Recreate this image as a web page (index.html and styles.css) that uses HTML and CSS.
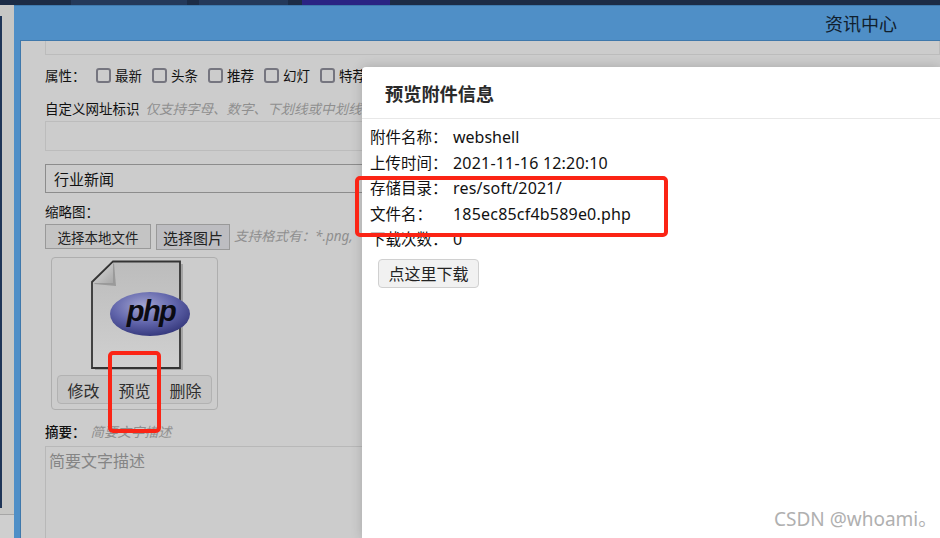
FILE: index.html
```html
<!DOCTYPE html>
<html lang="zh-CN">
<head>
<meta charset="utf-8">
<title>预览附件信息</title>
<link rel="stylesheet" href="styles.css">
</head>
<body>
<div class="page">
  <div class="tabs">
    <span class="tab tab-a"></span>
    <span class="tab tab-b"></span>
    <span class="tab tab-c"></span>
  </div>
  <div class="desk">
    <aside class="side">
      <div class="side-top"><span class="side-stripe"></span></div>
      <div class="side-bottom"></div>
    </aside>
    <main class="window">
      <header class="win-head">资讯中心</header>
      <div class="win-body">
        <div class="cut-input"></div>
        <div class="attrs">
          <span class="attr-label">属性：</span>
          <label class="check"><input type="checkbox">最新</label>
          <label class="check"><input type="checkbox">头条</label>
          <label class="check"><input type="checkbox">推荐</label>
          <label class="check"><input type="checkbox">幻灯</label>
          <label class="check"><input type="checkbox">特荐</label>
        </div>
        <div class="url-label">自定义网址标识<em class="hint hint-url">仅支持字母、数字、下划线或中划线组成</em></div>
        <div class="text-box"></div>
        <div class="select-box">行业新闻</div>
        <div class="thumb-label">缩略图：</div>
        <div class="thumb-actions">
          <button class="btn-local" type="button">选择本地文件</button>
          <button class="btn-image" type="button">选择图片</button>
          <em class="hint hint-format">支持格式有：*.png,</em>
        </div>
        <div class="thumb-card">
          <svg class="php-file" viewBox="0 0 104 110" aria-hidden="true">
            <defs>
              <linearGradient id="sheet" x1="0" y1="0" x2="0" y2="1">
                <stop offset="0" stop-color="#bcbcbc"/>
                <stop offset="1" stop-color="#d0d0d0"/>
              </linearGradient>
              <linearGradient id="fold" x1="0" y1="0" x2="1" y2="1">
                <stop offset="0" stop-color="#dcdcdc"/>
                <stop offset="1" stop-color="#a8a8a8"/>
              </linearGradient>
              <radialGradient id="oval" cx="0.42" cy="0.32" r="0.72">
                <stop offset="0" stop-color="#a4a6d2"/>
                <stop offset="0.55" stop-color="#6064aa"/>
                <stop offset="1" stop-color="#323579"/>
              </radialGradient>
            </defs>
            <path d="M92 4V110H5" fill="none" stroke="#a4a4a4" stroke-width="2"/>
            <path d="M23 1.5H90V108H2V22Z" fill="url(#sheet)" stroke="#343434" stroke-width="1.8"/>
            <path d="M24 3L26 26L4 24Z" fill="#9a9a9a"/>
            <path d="M23 3V23H3.500Z" fill="url(#fold)"/>
            <ellipse cx="60" cy="54" rx="40" ry="22" fill="url(#oval)"/>
            <text class="php-word" x="61" y="61" text-anchor="middle">php</text>
          </svg>
          <div class="btn-group">
            <button type="button">修改</button>
            <button type="button">预览</button>
            <button type="button">删除</button>
          </div>
        </div>
        <div class="summary-label"><b>摘要：</b><em class="hint hint-summary">简要文字描述</em></div>
        <div class="summary-box">简要文字描述</div>
      </div>
    </main>
  </div>

  <section class="modal">
    <h2 class="modal-title">预览附件信息</h2>
    <dl class="info">
      <div class="info-row"><dt>附件名称：</dt><dd>webshell</dd></div>
      <div class="info-row"><dt>上传时间：</dt><dd class="digits">2021-11-16 12:20:10</dd></div>
      <div class="info-row"><dt>存储目录：</dt><dd class="digits">res/soft/2021/</dd></div>
      <div class="info-row"><dt>文件名：</dt><dd class="digits">185ec85cf4b589e0.php</dd></div>
      <div class="info-row"><dt>下载次数：</dt><dd>0</dd></div>
    </dl>
    <button class="download" type="button">点这里下载</button>
  </section>

  <div class="mark mark-info"></div>
  <div class="mark mark-preview"></div>
  <div class="watermark">CSDN @whoami。</div>
</div>
</body>
</html>
```

FILE: styles.css
```css
* { box-sizing: border-box; }
html, body { margin: 0; padding: 0; }
body {
  font-family: "Noto Sans", "Noto Sans CJK SC", sans-serif;
  color: #111;
}
button { font-family: inherit; margin: 0; padding: 0; color: #222; }
.page {
  position: relative;
  width: 940px;
  height: 538px;
  overflow: hidden;
  background: #1c2c46;
}
.tabs { display: flex; height: 5px; padding-left: 71px; }
.tab { display: block; height: 5px; background: #24395a; }
.tab-a { width: 116px; }
.tab-b { width: 89px; margin-left: 12px; }
.tab-c { width: 88px; margin-left: 14px; background: #2a2383; }

.desk { display: flex; height: 533px; }
.side { width: 14px; display: flex; flex-direction: column; }
.side-top {
  height: 510px;
  padding-top: 11px;
  background: #c7c7c5;
  border-bottom: 1px solid #a6a6a6;
}
.side-stripe { display: block; width: 2px; height: 492px; background: #1f3557; }
.side-bottom { flex: 1; background: #cfcfcf; }

.window {
  flex: 1;
  display: flex;
  flex-direction: column;
  min-width: 0;
  background: #4f8fc7;
  border-top: 1px solid #3f7aae;
  padding-left: 6px;
}
.win-head {
  height: 34px;
  padding-right: 43px;
  text-align: right;
  font-size: 18px;
  line-height: 36px;
  color: #10202e;
}
.win-body {
  flex: 1;
  padding-left: 24px;
  background: #ccc;
  border-top: 1px solid #3f78ab;
  border-left: 1px solid #3f78ab;
  overflow: hidden;
}
.cut-input { height: 14px; border: 1px solid #bcbcbc; border-top: 0; }

.attrs { display: flex; align-items: center; height: 16px; margin-top: 12px; font-size: 14px; white-space: nowrap; }
.attr-label { width: 51px; font-size: 13.5px; }
.check { display: flex; align-items: center; width: 56px; font-size: 13.5px; }
.check input {
  appearance: none;
  width: 15px;
  height: 15px;
  margin: 0 4px 0 0;
  border: 2px solid #75757f;
  border-radius: 3px;
  background: #ccc;
}

.url-label { margin-top: 18px; height: 17px; font-size: 13.5px; line-height: 17px; white-space: nowrap; }
.hint { font-style: italic; color: #8f8f8f; font-size: 13.5px; }
.hint-url { margin-left: 6px; }
.text-box { height: 30px; margin-top: 3px; border: 1px solid #bcbcbc; }
.select-box {
  height: 29px;
  margin-top: 13px;
  padding-left: 8px;
  border: 1px solid #8c8c8c;
  font-size: 15px;
  line-height: 28px;
}
.thumb-label { margin-top: 10px; height: 18px; font-size: 13.5px; line-height: 18px; }
.thumb-actions { display: flex; align-items: flex-start; margin-top: 3px; height: 26px; white-space: nowrap; }
.btn-local {
  width: 106px;
  height: 25px;
  background: #c4c4c4;
  border: 1px solid #999;
  font-size: 13.5px;
}
.btn-image {
  width: 74px;
  height: 26px;
  margin-left: 5px;
  background: #bdbdc1;
  border: 1px solid #999;
  font-size: 15px;
}
.hint-format { margin-left: 4px; line-height: 25px; }

.thumb-card {
  width: 167px;
  height: 153px;
  margin: 7px 0 0 6px;
  padding: 2px 5px 0;
  border: 1px solid #aeaeae;
  border-radius: 4px;
}
.php-file { display: block; width: 104px; height: 110px; margin-left: 33px; }
.php-word { font-family: "Liberation Sans", sans-serif; font-size: 29px; font-weight: 700; font-style: italic; letter-spacing: -1.5px; fill: #0b0b12; }
.btn-group {
  display: flex;
  height: 29px;
  margin-top: 5px;
  overflow: hidden;
  background: #c5c5c5;
  border: 1px solid #b2b2b2;
  border-radius: 4px;
}
.btn-group button {
  flex: 1;
  background: transparent;
  border: 0;
  font-size: 16px;
  color: #2e2e2e;
}

.summary-label { margin-top: 13px; height: 18px; font-size: 13.5px; line-height: 18px; white-space: nowrap; }
.summary-label b { font-weight: 500; }
.hint-summary { margin-left: 5px; }
.summary-box {
  height: 200px;
  margin-top: 5px;
  padding: 2px 3px;
  border: 1px solid #b8b8b8;
  font-size: 16px;
  line-height: 24px;
  color: #858585;
}

.modal {
  position: absolute;
  left: 362px;
  top: 67px;
  right: 0;
  bottom: 0;
  background: #fff;
  border-top-left-radius: 4px;
  box-shadow: 0 0 12px rgba(0, 0, 0, .18);
}
.modal-title {
  height: 52px;
  margin: 0;
  padding-left: 23px;
  border-bottom: 1px solid #e8e8e8;
  font-size: 18.2px;
  font-weight: 700;
  line-height: 54px;
  color: #2a2a2a;
}
.info { margin: 6px 0 0; padding-left: 8px; font-size: 16px; line-height: 25.5px; }
.info-row { display: flex; }
.info dt { width: 83px; font-size: 15.5px; }
.info dd { margin: 0; }
.info .digits { letter-spacing: .2px; }
.download {
  display: block;
  width: 101px;
  height: 29px;
  margin: 6px 0 0 16px;
  background: #f1f1f1;
  border: 1px solid #d0d0d0;
  border-radius: 4px;
  font-size: 16px;
}

.mark {
  position: absolute;
  border: 4px solid #fb2415;
  border-radius: 5px;
}
.mark-info { left: 355px; top: 176px; width: 313px; height: 61px; }
.mark-preview { left: 108px; top: 351px; width: 53px; height: 82px; }
.watermark {
  position: absolute;
  left: 774px;
  top: 506px;
  font-size: 19px;
  line-height: 26px;
  color: #b0b0b0;
  white-space: nowrap;
}
```
